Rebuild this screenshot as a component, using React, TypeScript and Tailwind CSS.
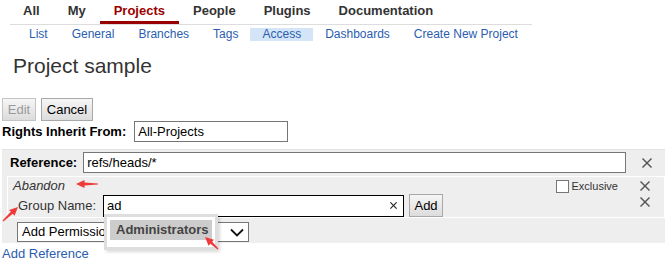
import React from "react";

const XIcon = ({ size = 10, stroke = "#555", sw = 1.4 }: { size?: number; stroke?: string; sw?: number }) => (
  <svg width={size} height={size} viewBox="0 0 10 10" className="block">
    <line x1="0.5" y1="0.5" x2="9.5" y2="9.5" stroke={stroke} strokeWidth={sw} />
    <line x1="9.5" y1="0.5" x2="0.5" y2="9.5" stroke={stroke} strokeWidth={sw} />
  </svg>
);

const Arrow = ({ x1, y1, x2, y2 }: { x1: number; y1: number; x2: number; y2: number }) => {
  const dx = x2 - x1;
  const dy = y2 - y1;
  const len = Math.hypot(dx, dy);
  const ux = dx / len;
  const uy = dy / len;
  const px = -uy;
  const py = ux;
  const headLen = 8.5;
  const headW = 4;
  const bx = x2 - ux * headLen;
  const by = y2 - uy * headLen;
  const pts = [
    [x1 + px * 0.6, y1 + py * 0.6],
    [bx + px * 1.4, by + py * 1.4],
    [bx + px * headW, by + py * headW],
    [x2, y2],
    [bx - px * headW, by - py * headW],
    [bx - px * 1.4, by - py * 1.4],
    [x1 - px * 0.6, y1 - py * 0.6],
  ]
    .map((p) => p.join(","))
    .join(" ");
  return <polygon points={pts} fill="#f03a3a" />;
};

export default function App() {
  const top = ["All", "My", "Projects", "People", "Plugins", "Documentation"];
  const sub = ["List", "General", "Branches", "Tags", "Access", "Dashboards", "Create New Project"];
  return (
    <div
      className="relative w-[667px] h-[265px] overflow-hidden bg-white text-[13px] text-black"
      style={{ fontFamily: '"Liberation Sans", Arial, sans-serif' }}
    >
      {/* top nav */}
      <div className="flex pl-[9px] pt-[2px]">
        {top.map((t) => (
          <div
            key={t}
            className={
              t === "Projects"
                ? "px-[14px] pb-[2px] text-[13px] font-bold leading-[17px] text-[#990000] border-b-[3px] border-[#990000]"
                : "px-[14px] pb-[2px] text-[13px] font-bold leading-[17px] text-[#333333] border-b-[3px] border-transparent"
            }
          >
            {t}
          </div>
        ))}
      </div>
      {/* sub nav */}
      <div className="ml-[10px] w-[522px] border-t border-[#dddddd] pt-[3px] pl-[7px] flex">
        {sub.map((s) => (
          <div
            key={s}
            className={
              s === "Access"
                ? "px-[12px] text-[12px] leading-[13px] text-[#2a5db0] bg-[#d4e5f7]"
                : "px-[12px] text-[12px] leading-[13px] text-[#2a5db0]"
            }
          >
            {s}
          </div>
        ))}
      </div>
      {/* title */}
      <div className="mt-[13px] ml-[13px] text-[21px] leading-[24px] text-[#333333]">Project sample</div>
      {/* buttons */}
      <div className="mt-[20px] ml-[2px] flex gap-[5px]">
        <div className="w-[34px] h-[23px] flex items-center justify-center border border-[#c4c4c4] bg-gradient-to-b from-[#f6f6f6] to-[#dcdcdc] text-[#9a9a9a]">
          Edit
        </div>
        <div className="w-[52px] h-[23px] flex items-center justify-center border border-[#a8a8a8] bg-gradient-to-b from-[#f6f6f6] to-[#dcdcdc] text-black">
          Cancel
        </div>
      </div>
      {/* rights inherit */}
      <div className="ml-[2px] flex items-center">
        <span className="font-bold">Rights Inherit From:</span>
        <div className="ml-[8px] w-[154px] h-[21px] border border-[#767676] flex items-center pl-[3px]">All-Projects</div>
      </div>
      {/* reference box */}
      <div className="mt-[7px] ml-[2px] w-[663px] bg-[#eeeeee] border-t border-[#e4e4e4] pt-[2px] pb-[1px]">
        <div className="flex items-center">
          <span className="ml-[8px] font-bold">Reference:</span>
          <div className="ml-[6px] w-[543px] h-[21px] bg-white border border-[#767676] flex items-center pl-[3px]">
            refs/heads/*
          </div>
          <div className="ml-[16px]">
            <XIcon />
          </div>
        </div>
        {/* permission box */}
        <div className="mt-[3px] ml-[5px] w-[658px] border border-white flex">
          <div className="flex-1 flex flex-col">
            <div className="flex items-center h-[16px]">
              <span className="ml-[5px] italic text-[#333333] leading-[15px]">Abandon</span>
              <div className="ml-auto flex items-center mr-[3px] mt-[3px]">
                <div className="w-[13px] h-[13px] bg-white border border-[#767676]" />
                <span className="ml-[3px] text-[11px] text-[#333333]">Exclusive</span>
              </div>
            </div>
            <div className="flex items-center mt-[1px]">
              <span className="ml-[10px] text-[#333333]">Group Name:</span>
              <div className="ml-[7px] w-[301px] h-[22px] bg-white border border-black flex items-center pl-[3px] pr-[6px]">
                <span>ad</span>
                <div className="ml-auto">
                  <XIcon size={7} stroke="#222" sw={1.6} />
                </div>
              </div>
              <div className="ml-[5px] w-[34px] h-[23px] flex items-center justify-center border border-[#a8a8a8] bg-gradient-to-b from-[#f6f6f6] to-[#dcdcdc]">
                Add
              </div>
            </div>
          </div>
          <div className="w-[43px] flex flex-col pl-[19px] pt-[4px] gap-[6px]">
            <XIcon />
            <XIcon />
          </div>
        </div>
        {/* add permission select */}
        <div className="mt-[4px] ml-[15px] w-[232px] h-[20px] bg-white border border-[#767676] flex items-center pl-[4px] pr-[4px]">
          <span>Add Permission...</span>
          <svg width="14" height="9" viewBox="0 0 14 9" className="ml-auto">
            <polyline points="1,1.5 7,7.5 13,1.5" fill="none" stroke="#111" strokeWidth="1.8" />
          </svg>
        </div>
      </div>
      {/* add reference */}
      <div className="mt-[3px] ml-[2px] leading-[15px] text-[#2a5db0]">Add Reference</div>

      {/* suggestion popup */}
      <div className="absolute left-[104px] top-[214px] w-[114px] h-[36px] bg-white border-[3px] border-[#dedede] p-[3px] shadow-[2px_2px_3px_rgba(0,0,0,0.15)]">
        <div className="h-[20px] bg-[#cccccc] flex items-center pl-[6px] font-bold text-[#444444]">Administrators</div>
      </div>

      {/* annotation arrows */}
      <svg className="absolute left-0 top-0 pointer-events-none" width="667" height="265">
        <Arrow x1={98} y1={184} x2={76} y2={184} />
        <Arrow x1={3} y1={221} x2={18} y2={207} />
        <Arrow x1={218} y1={249} x2={205} y2={237} />
      </svg>
    </div>
  );
}
